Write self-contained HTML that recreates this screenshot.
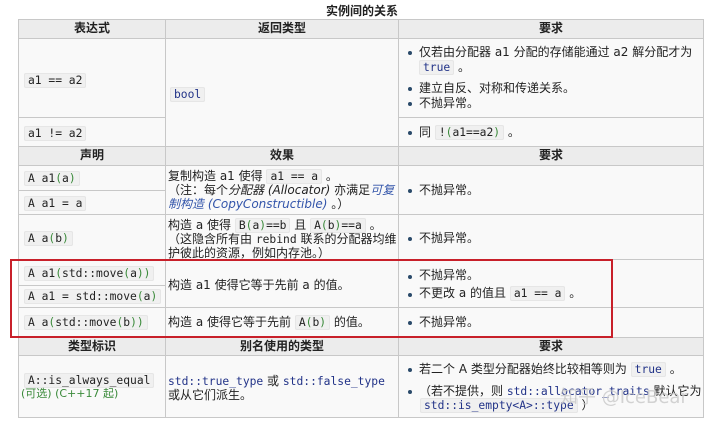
<!DOCTYPE html>
<html><head><meta charset="utf-8"><style>
*{margin:0;padding:0;box-sizing:border-box}
body{width:720px;height:427px;background:#fff;position:relative;overflow:hidden;font-family:"DejaVu Sans","Liberation Sans","Noto Sans CJK SC",sans-serif;font-size:12px;color:#222}
.c{position:absolute;border:1px solid #c8c8c8;background:#f9f9f9;}
.h{background:#ececec;font-weight:bold;text-align:center;line-height:17px;font-size:12px}
.t{position:absolute;white-space:nowrap;line-height:14px}
code,.m{font-family:"DejaVu Sans Mono","Liberation Mono",monospace;font-size:11.3px}
code{background:#f0f0f0;border:1px solid #e6e6e6;padding:0 3px;border-radius:2px}
.b{color:#223388}
.g{color:#3a8a3a}
.bl{color:#3355aa;font-style:italic}
.dot{position:absolute;width:4px;height:4px;border-radius:2px;background:#2a4a6a}
</style></head><body>
<div class="t" style="left:326px;top:4px;font-weight:bold">实例间的关系</div>

<div class="c h" style="left:18px;top:19px;width:148px;height:20px">表达式</div>
<div class="c h" style="left:165px;top:19px;width:234px;height:20px">返回类型</div>
<div class="c h" style="left:398px;top:19px;width:306px;height:20px">要求</div>

<div class="c" style="left:18px;top:38px;width:148px;height:80px"></div>
<div class="c" style="left:18px;top:117px;width:148px;height:30px"></div>
<div class="c" style="left:165px;top:38px;width:234px;height:109px"></div>
<div class="c" style="left:398px;top:38px;width:306px;height:80px"></div>
<div class="c" style="left:398px;top:117px;width:306px;height:30px"></div>
<div class="t" style="left:24px;top:73px"><code>a1 == a2</code></div>
<div class="t" style="left:24px;top:126px"><code>a1 != a2</code></div>
<div class="t" style="left:170px;top:87px"><code class="b">bool</code></div>
<div class="dot" style="left:408px;top:51px"></div>
<div class="t" style="left:419px;top:45px">仅若由分配器 a1 分配的存储能通过 a2 解分配才为</div>
<div class="t" style="left:419px;top:60px"><code class="b">true</code> 。</div>
<div class="dot" style="left:408px;top:87px"></div>
<div class="t" style="left:419px;top:81px">建立自反、对称和传递关系。</div>
<div class="dot" style="left:408px;top:102px"></div>
<div class="t" style="left:419px;top:96px">不抛异常。</div>
<div class="dot" style="left:408px;top:131px"></div>
<div class="t" style="left:419px;top:125px">同 <code>!<span class="g">(</span>a1==a2<span class="g">)</span></code> 。</div>

<div class="c h" style="left:18px;top:146px;width:148px;height:20px">声明</div>
<div class="c h" style="left:165px;top:146px;width:234px;height:20px">效果</div>
<div class="c h" style="left:398px;top:146px;width:306px;height:20px">要求</div>

<div class="c" style="left:18px;top:165px;width:148px;height:26px"></div>
<div class="c" style="left:18px;top:190px;width:148px;height:25px"></div>
<div class="c" style="left:165px;top:165px;width:234px;height:50px"></div>
<div class="c" style="left:398px;top:165px;width:306px;height:50px"></div>
<div class="t" style="left:24px;top:171px"><code>A a1<span class="g">(</span>a<span class="g">)</span></code></div>
<div class="t" style="left:24px;top:196px"><code>A a1 = a</code></div>
<div class="t" style="left:168px;top:169px">复制构造 a1 使得 <code>a1 == a</code> 。</div>
<div class="t" style="left:168px;top:183px">（注：每个<i>分配器 (Allocator)</i> 亦满足<span class="bl">可复</span></div>
<div class="t" style="left:168px;top:197px"><span class="bl">制构造 (CopyConstructible)</span> 。）</div>
<div class="dot" style="left:408px;top:189px"></div>
<div class="t" style="left:419px;top:183px">不抛异常。</div>

<div class="c" style="left:18px;top:214px;width:148px;height:46px"></div>
<div class="c" style="left:165px;top:214px;width:234px;height:46px"></div>
<div class="c" style="left:398px;top:214px;width:306px;height:46px"></div>
<div class="t" style="left:24px;top:231px"><code>A a<span class="g">(</span>b<span class="g">)</span></code></div>
<div class="t" style="left:168px;top:218px">构造 a 使得 <code>B<span class="g">(</span>a<span class="g">)</span>==b</code> 且 <code>A<span class="g">(</span>b<span class="g">)</span>==a</code> 。</div>
<div class="t" style="left:168px;top:232px">（这隐含所有由 <span class="m">rebind</span> 联系的分配器均维</div>
<div class="t" style="left:168px;top:246px">护彼此的资源，例如内存池。）</div>
<div class="dot" style="left:408px;top:237px"></div>
<div class="t" style="left:419px;top:231px">不抛异常。</div>

<div class="c" style="left:18px;top:259px;width:148px;height:27px"></div>
<div class="c" style="left:18px;top:285px;width:148px;height:23px"></div>
<div class="c" style="left:165px;top:259px;width:234px;height:49px"></div>
<div class="c" style="left:398px;top:259px;width:306px;height:49px"></div>
<div class="t" style="left:24px;top:266px"><code>A a1<span class="g">(</span>std::move<span class="g">(</span>a<span class="g">))</span></code></div>
<div class="t" style="left:24px;top:289px"><code>A a1 = std::move<span class="g">(</span>a<span class="g">)</span></code></div>
<div class="t" style="left:168px;top:278px">构造 a1 使得它等于先前 a 的值。</div>
<div class="dot" style="left:408px;top:275px"></div>
<div class="t" style="left:419px;top:268px">不抛异常。</div>
<div class="dot" style="left:408px;top:293px"></div>
<div class="t" style="left:419px;top:286px">不更改 a 的值且 <code>a1 == a</code> 。</div>

<div class="c" style="left:18px;top:307px;width:148px;height:31px"></div>
<div class="c" style="left:165px;top:307px;width:234px;height:31px"></div>
<div class="c" style="left:398px;top:307px;width:306px;height:31px"></div>
<div class="t" style="left:24px;top:315px"><code>A a<span class="g">(</span>std::move<span class="g">(</span>b<span class="g">))</span></code></div>
<div class="t" style="left:168px;top:315px">构造 a 使得它等于先前 <code>A<span class="g">(</span>b<span class="g">)</span></code> 的值。</div>
<div class="dot" style="left:408px;top:321px"></div>
<div class="t" style="left:419px;top:315px">不抛异常。</div>

<div class="c h" style="left:18px;top:337px;width:148px;height:19px;line-height:16px">类型标识</div>
<div class="c h" style="left:165px;top:337px;width:234px;height:19px;line-height:16px">别名使用的类型</div>
<div class="c h" style="left:398px;top:337px;width:306px;height:19px;line-height:16px">要求</div>

<div class="c" style="left:18px;top:355px;width:148px;height:63px"></div>
<div class="c" style="left:165px;top:355px;width:234px;height:63px"></div>
<div class="c" style="left:398px;top:355px;width:306px;height:63px"></div>
<div class="t" style="left:24px;top:373px"><code>A::is_always_equal</code></div>
<div class="t g" style="left:21px;top:387px;font-size:11px">(可选) (C++17 起)</div>
<div class="t" style="left:168px;top:374px"><span class="b m">std::true_type</span> 或 <span class="b m">std::false_type</span></div>
<div class="t" style="left:168px;top:388px">或从它们派生。</div>
<div class="dot" style="left:408px;top:368px"></div>
<div class="t" style="left:419px;top:362px">若二个 A 类型分配器始终比较相等则为 <code class="b">true</code> 。</div>
<div class="dot" style="left:408px;top:390px"></div>
<div class="t" style="left:419px;top:384px">（若不提供，则 <span class="b m">std::allocator_traits</span> 默认它为</div>
<div class="t" style="left:420px;top:398px"><code class="b">std::is_empty&lt;A&gt;::type</code> ）</div>
<div class="t" style="left:560px;top:387px;font-size:18px;color:rgba(200,200,200,0.8);line-height:22px">知乎 @IceBear</div>

<div style="position:absolute;left:10px;top:259px;width:603px;height:79px;border:2px solid #c8202a"></div>
</body></html>
